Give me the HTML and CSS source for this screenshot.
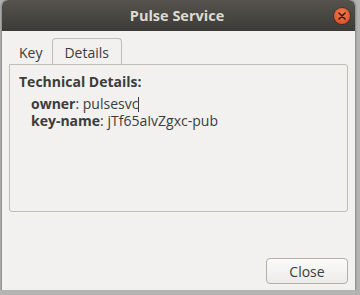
FILE: index.html
```html
<!DOCTYPE html>
<html lang="en">
<head>
    <meta charset="UTF-8">
    <title>Pulse Service</title>
    <link rel="stylesheet" href="styles.css">
</head>
<body>
<div class="window">
    <div class="titlebar">
        <span class="title">Pulse Service</span>
        <span class="close-dot">
            <svg width="8" height="8" viewBox="0 0 8 8"><path d="M1 1L7 7M7 1L1 7" stroke="#3a1a0c" stroke-width="1.6" stroke-linecap="round"/></svg>
        </span>
    </div>
    <div class="content">
        <div class="notebook">
            <div class="tabs">
                <div class="tab">Key</div>
                <div class="tab active">Details</div>
            </div>
            <div class="frame">
                <div class="heading">Technical Details:</div>
                <div class="details">
                    <div><b>owner</b>: pulsesvc<span class="caret"></span></div>
                    <div><b>key-name</b>: jTf65aIvZgxc-pub</div>
                </div>
            </div>
        </div>
        <div class="actions">
            <button class="button">Close</button>
        </div>
    </div>
</div>
</body>
</html>
```

FILE: styles.css
```css
body {
    margin: 0;
    background: #b4b4b2;
    font-family: "Open Sans", "Noto Sans", sans-serif;
    font-size: 14px;
    color: #3c3c3c;
}
.window {
    margin-left: 2px;
    width: 353px;
    height: 290px;
    background: #f2f1f0;
    border-radius: 6px 6px 0 0;
    box-shadow: 0 0 2px 1px rgba(0, 0, 0, 0.25);
    overflow: hidden;
    display: flex;
    flex-direction: column;
}
.titlebar {
    height: 31px;
    background: linear-gradient(#55534c, #3c3b37);
    display: flex;
    align-items: center;
    justify-content: center;
    position: relative;
}
.title {
    color: #dfdbd2;
    font-weight: bold;
    font-size: 14.5px;
    margin-left: -3px;
}
.close-dot {
    position: absolute;
    right: 5px;
    top: 8px;
    width: 16px;
    height: 16px;
    border-radius: 50%;
    background: radial-gradient(circle at 50% 35%, #f57b4f, #d9461a);
    box-shadow: 0 0 0 1px rgba(0, 0, 0, 0.25);
    display: flex;
    align-items: center;
    justify-content: center;
}
.content {
    flex: 1;
    padding: 7px 7px 6px 7px;
    display: flex;
    flex-direction: column;
}
.tabs {
    display: flex;
    height: 26px;
    padding-left: 1px;
}
.tab {
    padding: 5px 10px 0 9px;
    height: 21px;
}
.tab.active {
    border: 1px solid #c0bcb6;
    border-bottom: none;
    border-radius: 4px 4px 0 0;
    background: #f2f1f0;
    padding: 4px 12px 0 11px;
    margin-bottom: -1px;
    position: relative;
}
.frame {
    box-sizing: border-box;
    height: 148px;
    border: 1px solid #c0bcb6;
    border-radius: 0 3px 3px 3px;
    padding: 7px 9px;
}
.heading {
    font-weight: bold;
}
.details {
    margin-top: 4px;
    padding-left: 12px;
    line-height: 17px;
}
.caret {
    display: inline-block;
    width: 1px;
    height: 15px;
    background: #3c3c3c;
    vertical-align: -3px;
}
.actions {
    margin-top: auto;
    display: flex;
    justify-content: flex-end;
}
.button {
    width: 82px;
    height: 26px;
    font-family: inherit;
    font-size: 14px;
    color: #3c3c3c;
    background: linear-gradient(#fbfbfa, #ecebe9);
    border: 1px solid #b2aea8;
    border-radius: 4px;
}
```
